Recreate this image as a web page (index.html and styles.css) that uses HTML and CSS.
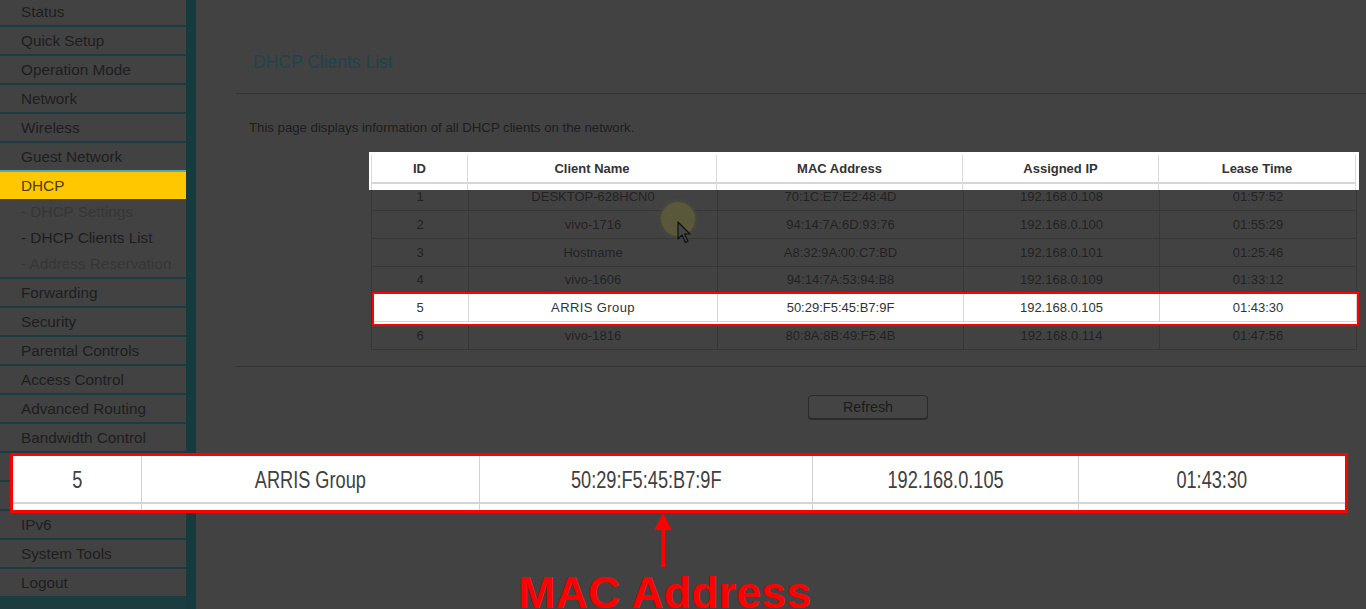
FILE: index.html
```html
<!DOCTYPE html>
<html lang="en">
<head>
<meta charset="utf-8">
<title>DHCP Clients List</title>
<link rel="stylesheet" href="styles.css">
</head>
<body>
<div class="page">
  <aside class="sidebar">
    <ul class="menu">
      <li class="item">Status</li>
      <li class="item">Quick Setup</li>
      <li class="item">Operation Mode</li>
      <li class="item">Network</li>
      <li class="item">Wireless</li>
      <li class="item">Guest Network</li>
      <li class="item active">DHCP</li>
      <li class="sub">
        <div class="subitem dim">- DHCP Settings</div>
        <div class="subitem">- DHCP Clients List</div>
        <div class="subitem dim">- Address Reservation</div>
      </li>
      <li class="item">Forwarding</li>
      <li class="item">Security</li>
      <li class="item">Parental Controls</li>
      <li class="item">Access Control</li>
      <li class="item">Advanced Routing</li>
      <li class="item">Bandwidth Control</li>
      <li class="item"></li>
      <li class="item"></li>
      <li class="item">IPv6</li>
      <li class="item">System Tools</li>
      <li class="item">Logout</li>
    </ul>
  </aside>

  <main class="main">
    <h1 class="title">DHCP Clients List</h1>
    <div class="rule"></div>
    <p class="desc">This page displays information of all DHCP clients on the network.</p>

    <div class="table">
      <div class="thead">
        <div class="th">ID</div>
        <div class="th">Client Name</div>
        <div class="th">MAC Address</div>
        <div class="th">Assigned IP</div>
        <div class="th">Lease Time</div>
      </div>
      <div class="tr"><div class="td">1</div><div class="td">DESKTOP-628HCN0</div><div class="td">70:1C:E7:E2:48:4D</div><div class="td">192.168.0.108</div><div class="td">01:57:52</div></div>
      <div class="tr"><div class="td">2</div><div class="td">vivo-1716</div><div class="td">94:14:7A:6D:93:76</div><div class="td">192.168.0.100</div><div class="td">01:55:29</div></div>
      <div class="tr"><div class="td">3</div><div class="td">Hostname</div><div class="td">A8:32:9A:00:C7:BD</div><div class="td">192.168.0.101</div><div class="td">01:25:46</div></div>
      <div class="tr"><div class="td">4</div><div class="td">vivo-1606</div><div class="td">94:14:7A:53:94:B8</div><div class="td">192.168.0.109</div><div class="td">01:33:12</div></div>
      <div class="tr hl"><div class="td">5</div><div class="td name">ARRIS Group</div><div class="td">50:29:F5:45:B7:9F</div><div class="td">192.168.0.105</div><div class="td">01:43:30</div></div>
      <div class="tr"><div class="td">6</div><div class="td">vivo-1816</div><div class="td">80:8A:8B:49:F5:4B</div><div class="td">192.168.0.114</div><div class="td">01:47:56</div></div>
    </div>

    <div class="rule rule-bottom"></div>
    <div class="actions"><button class="btn" type="button">Refresh</button></div>
  </main>
</div>

<div class="spot"></div>
<svg class="cursor" width="16" height="24" viewBox="0 0 16 24"><path d="M1 1 L1 18 L5 14 L8.5 21.5 L11 20.3 L7.6 13 L13 13 Z" fill="#454545" stroke="#111" stroke-width="1.2" stroke-linejoin="round"/></svg>

<div class="zoomrow">
  <div class="zc"><span class="zt">5</span></div>
  <div class="zc"><span class="zt">ARRIS Group</span></div>
  <div class="zc"><span class="zt">50:29:F5:45:B7:9F</span></div>
  <div class="zc"><span class="zt">192.168.0.105</span></div>
  <div class="zc last"><span class="zt">01:43:30</span></div>
</div>

<svg class="arrow" width="26" height="56" viewBox="0 0 26 56"><polygon points="13,0 4,17 22,17" fill="#ff0000"/><rect x="11.5" y="15" width="3.5" height="39" fill="#ff0000"/></svg>
<div class="label">MAC Address</div>
</body>
</html>
```

FILE: styles.css
```css
* { box-sizing: border-box; }

html, body {
  margin: 0;
  padding: 0;
}

body {
  width: 1366px;
  height: 609px;
  overflow: hidden;
  position: relative;
  background: #424242;
  font-family: "Liberation Sans", Arial, sans-serif;
  color: #1f1f1f;
}

.page {
  display: flex;
  height: 609px;
}

/* ---------- sidebar ---------- */
.sidebar {
  width: 196px;
  flex: 0 0 196px;
  background: #1b3c40;
  border-right: 10px solid #173a3e;
  overflow: hidden;
}

.menu {
  list-style: none;
  margin: -2px 0 0 0;
  padding: 0;
  width: 186px;
}

.item {
  height: 27px;
  line-height: 27px;
  margin-bottom: 2px;
  padding-left: 21px;
  background: #424242;
  font-size: 15.3px;
  color: #1e1e1e;
  white-space: nowrap;
}

.item.active {
  background: #ffc700;
  color: #4a3d06;
  margin-bottom: 0;
  box-shadow: 0 -2px 0 #5aa6a8;
}

.sub {
  background: #424242;
  margin-bottom: 2px;
}

.subitem {
  height: 26px;
  line-height: 26px;
  padding-left: 21px;
  font-size: 15.3px;
  color: #1e1e1e;
  white-space: nowrap;
}

.subitem.dim {
  color: #363636;
}

/* ---------- main ---------- */
.main {
  flex: 1;
  padding-top: 52px;
}

.title {
  margin: 0 0 0 57px;
  height: 20px;
  line-height: 20px;
  font-size: 17.5px;
  font-weight: normal;
  color: #1d454b;
}

.rule {
  margin: 21px 0 0 40px;
  height: 1px;
  background: #353535;
}

.desc {
  margin: 26px 0 0 53px;
  height: 16px;
  line-height: 16px;
  font-size: 13.2px;
  color: #1d1d1d;
}

/* ---------- table ---------- */
.table {
  margin: 19px 0 0 175px;
  width: 986px;
  display: flex;
  flex-direction: column;
  border-left: 1px solid #373737;
}

.thead,
.tr {
  display: grid;
  grid-template-columns: 97px 249px 246px 196px 197px;
}

.thead {
  position: relative;
  z-index: 2;
  margin: -3px -2px -7px -3px;
  padding: 3px 2px 0 2px;
  background: #ffffff;
}

.th {
  height: 35px;
  line-height: 28px;
  text-align: center;
  font-size: 13px;
  font-weight: bold;
  color: #333333;
  border-right: 1px solid #dadada;
  background: linear-gradient(to bottom, #ffffff 0, #ffffff 27px, #d6d6d6 27px, #d6d6d6 29px, #ffffff 29px);
}

.th:first-child {
  border-left: 1px solid #dadada;
}

.tr {
  height: 27.8px;
}

.td {
  line-height: 27px;
  text-align: center;
  font-size: 13px;
  color: #222222;
  border-right: 1px solid #373737;
  border-bottom: 1px solid #373737;
  white-space: nowrap;
}

.tr.hl {
  position: relative;
  z-index: 1;
  background: #ffffff;
  box-shadow: 0 2px 0 #ffffff;
}

.tr.hl::after {
  content: "";
  position: absolute;
  top: -2px;
  left: 0;
  right: -2px;
  bottom: -4px;
  border: 2px solid #ff0000;
  pointer-events: none;
}

.tr.hl .td {
  color: #333333;
  border-color: #d6d6d6;
}

.tr.hl .td.name {
  letter-spacing: 0.4px;
}

.rule-bottom {
  margin-top: 16px;
}

.actions {
  padding-top: 28px;
  padding-left: 612px;
}

.btn {
  width: 120px;
  height: 24px;
  padding: 0;
  font-family: "Liberation Sans", Arial, sans-serif;
  font-size: 14.3px;
  color: #1b1b1b;
  background: #444444;
  border: 1px solid #2b2b2b;
  border-radius: 4px;
  box-shadow: 0 1px 0 #2a2a2a;
}

/* ---------- overlays ---------- */
.spot {
  position: absolute;
  left: 661px;
  top: 202px;
  width: 34px;
  height: 34px;
  border-radius: 50%;
  background: #59583a;
  box-shadow: 0 0 4px 1px #4e4d3c;
}

.cursor {
  position: absolute;
  left: 677px;
  top: 221px;
}

.zoomrow {
  position: absolute;
  left: 10px;
  top: 453px;
  width: 1338px;
  height: 60px;
  border: 3px solid #ff0000;
  background: #ffffff;
  display: grid;
  grid-template-columns: 129px 338px 333px 266px 1fr;
  z-index: 3;
}

.zc {
  height: 54px;
  line-height: 48px;
  text-align: center;
  font-size: 23px;
  color: #404040;
  border-right: 1px solid #d2d2d2;
  background: linear-gradient(to bottom, #ffffff 0, #ffffff 46px, #d4d4d4 46px, #d4d4d4 48px, #ffffff 48px);
  white-space: nowrap;
  overflow: hidden;
}

.zc.last {
  border-right: 0;
}

.zt {
  display: inline-block;
  transform: scaleX(0.79);
}

.arrow {
  position: absolute;
  left: 650px;
  top: 513px;
}

.label {
  position: absolute;
  left: 518px;
  top: 571px;
  font-size: 45px;
  line-height: 44px;
  font-weight: bold;
  color: #ff0000;
  white-space: nowrap;
}
```
